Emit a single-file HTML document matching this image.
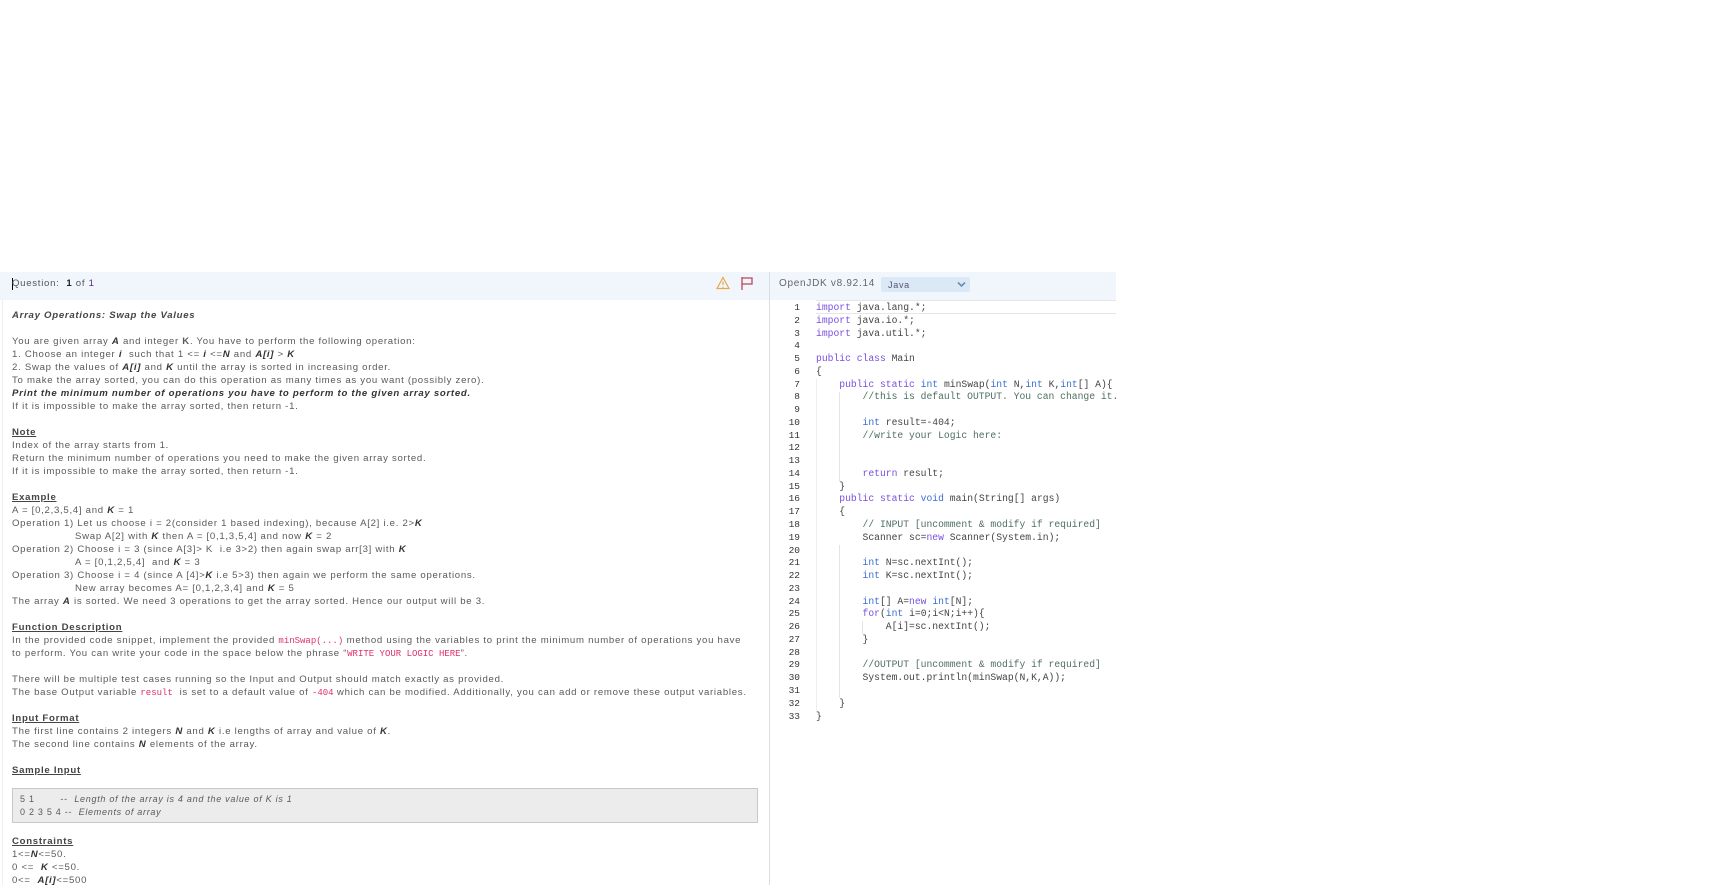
<!DOCTYPE html>
<html><head><meta charset="utf-8"><style>
*{margin:0;padding:0;box-sizing:border-box}
body{width:1716px;height:885px;background:#fff;position:relative;overflow:hidden;font-family:"Liberation Sans",sans-serif}
.hdr{position:absolute;top:272px;height:28px;background:#f1f6fc}
.t{position:absolute;left:12px;font-size:9.6px;letter-spacing:0.72px;color:#5a5a5a;white-space:nowrap;line-height:14px}
.h{font-weight:bold;text-decoration:underline;color:#444}
.b{font-weight:bold;font-style:italic;color:#333}
.m{font-family:"Liberation Mono",monospace;color:#e0306a;font-size:9px;letter-spacing:0}
.cw{position:absolute;left:816px;top:302px}
.cw div{height:12.78px;line-height:12.78px;font-family:"Liberation Mono",monospace;font-size:9.7px;color:#444;white-space:pre}
.nw{position:absolute;left:780px;top:302px;width:20px;text-align:right}
.nw div{height:12.78px;line-height:12.78px;font-family:"Liberation Mono",monospace;font-size:9.5px;color:#333}
.k{color:#7a4fe0}.ty{color:#3a6ed0}.cm{color:#4f6f60}
.g{position:absolute;width:1px;background:#e4e4e4}
</style></head><body>
<div class="hdr" style="left:0;width:769px"></div>
<div class="hdr" style="left:770px;width:346px"></div>
<div style="position:absolute;left:769px;top:272px;width:1px;height:613px;background:#dcdcdc"></div>
<div style="position:absolute;left:2px;top:300px;width:1px;height:585px;background:#eee"></div>
<div style="position:absolute;left:12px;top:278px;width:1px;height:12px;background:#000"></div>
<div class="t" style="top:277px;color:#555">Question: &nbsp;<b style="color:#223">1</b> of <span style="color:#5a2a7a">1</span></div>
<svg style="position:absolute;left:716px;top:276px" width="14" height="14" viewBox="0 0 14 14"><path d="M7 1.5L13 12.5H1Z" fill="none" stroke="#e8a64a" stroke-width="1.2"/><path d="M7 5.5V9M7 10.5V11.5" stroke="#e8a64a" stroke-width="1.2"/></svg>
<svg style="position:absolute;left:740px;top:276px" width="14" height="15" viewBox="0 0 14 15"><path d="M2 1V14M2 2H12V8H2" fill="none" stroke="#c0445a" stroke-width="1.3"/></svg>
<div class="t" style="left:779px;top:277px;font-size:10px;color:#666">OpenJDK v8.92.14</div>
<div style="position:absolute;left:881px;top:277px;width:89px;height:15px;background:#dbe8f5;border-radius:2px"></div>
<div class="t" style="left:888px;top:278px;font-size:9px;color:#557">Java</div>
<svg style="position:absolute;left:957px;top:281px" width="9" height="7" viewBox="0 0 9 7"><path d="M1 1.5L4.5 5L8 1.5" fill="none" stroke="#6a8fb0" stroke-width="1.6"/></svg>
<div style="position:absolute;left:816px;top:300px;width:300px;height:14px;border-top:1px solid #e6e6e6;border-bottom:1px solid #e6e6e6"></div>

<div class="t b" style="top:309px;color:#444">Array Operations: Swap the Values</div>
<div class="t" style="top:335px">You are given array <span class="b">A</span> and integer <b>K</b>. You have to perform the following operation:</div>
<div class="t" style="top:348px">1. Choose an integer <span class="b">i</span> &nbsp;such that 1 &lt;= <span class="b">i</span> &lt;=<span class="b">N</span> and <span class="b">A[i]</span> &gt; <span class="b">K</span></div>
<div class="t" style="top:361px">2. Swap the values of <span class="b">A[i]</span> and <span class="b">K</span> until the array is sorted in increasing order.</div>
<div class="t" style="top:374px">To make the array sorted, you can do this operation as many times as you want (possibly zero).</div>
<div class="t b" style="top:387px">Print the minimum number of operations you have to perform to the given array sorted.</div>
<div class="t" style="top:400px">If it is impossible to make the array sorted, then return -1.</div>
<div class="t h" style="top:426px">Note</div>
<div class="t" style="top:439px">Index of the array starts from 1.</div>
<div class="t" style="top:452px">Return the minimum number of operations you need to make the given array sorted.</div>
<div class="t" style="top:465px">If it is impossible to make the array sorted, then return -1.</div>
<div class="t h" style="top:491px">Example</div>
<div class="t" style="top:504px">A = [0,2,3,5,4] and <span class="b">K</span> = 1</div>
<div class="t" style="top:517px">Operation 1) Let us choose i = 2(consider 1 based indexing), because A[2] i.e. 2&gt;<span class="b">K</span></div>
<div class="t" style="top:530px;left:75px">Swap A[2] with <span class="b">K</span> then A = [0,1,3,5,4] and now <span class="b">K</span> = 2</div>
<div class="t" style="top:543px">Operation 2) Choose i = 3 (since A[3]&gt; K &nbsp;i.e 3&gt;2) then again swap arr[3] with <span class="b">K</span></div>
<div class="t" style="top:556px;left:75px">A = [0,1,2,5,4] &nbsp;and <span class="b">K</span> = 3</div>
<div class="t" style="top:569px">Operation 3) Choose i = 4 (since A [4]&gt;<span class="b">K</span> i.e 5&gt;3) then again we perform the same operations.</div>
<div class="t" style="top:582px;left:75px">New array becomes A= [0,1,2,3,4] and <span class="b">K</span> = 5</div>
<div class="t" style="top:595px">The array <span class="b">A</span> is sorted. We need 3 operations to get the array sorted. Hence our output will be 3.</div>
<div class="t h" style="top:621px">Function Description</div>
<div class="t" style="top:634px">In the provided code snippet, implement the provided <span class="m">minSwap(...)</span> method using the variables to print the minimum number of operations you have</div>
<div class="t" style="top:647px">to perform. You can write your code in the space below the phrase “<span class="m">WRITE YOUR LOGIC HERE</span>”.</div>
<div class="t" style="top:673px">There will be multiple test cases running so the Input and Output should match exactly as provided.</div>
<div class="t" style="top:686px">The base Output variable <span class="m">result</span> &nbsp;is set to a default value of <span class="m">-404</span> which can be modified. Additionally, you can add or remove these output variables.</div>
<div class="t h" style="top:712px">Input Format</div>
<div class="t" style="top:725px">The first line contains 2 integers <span class="b">N</span> and <span class="b">K</span> i.e lengths of array and value of <span class="b">K</span>.</div>
<div class="t" style="top:738px">The second line contains <span class="b">N</span> elements of the array.</div>
<div class="t h" style="top:764px">Sample Input</div>
<div style="position:absolute;left:12px;top:788px;width:746px;height:35px;background:#ececec;border:1px solid #c8c8c8"></div>
<div class="t" style="top:792px;left:20px;font-size:9px">5 1 &nbsp;&nbsp;&nbsp;&nbsp;&nbsp;&nbsp;&nbsp;-- &nbsp;<i>Length of the array is 4 and the value of K is 1</i></div>
<div class="t" style="top:805px;left:20px;font-size:9px">0 2 3 5 4 -- &nbsp;<i>Elements of array</i></div>
<div class="t h" style="top:835px">Constraints</div>
<div class="t" style="top:848px">1&lt;=<span class="b">N</span>&lt;=50.</div>
<div class="t" style="top:861px">0 &lt;= &nbsp;<span class="b">K</span> &lt;=50.</div>
<div class="t" style="top:874px">0&lt;= &nbsp;<span class="b">A[i]</span>&lt;=500</div>

<div class="g" style="left:816px;top:379px;height:333px;background:#eee"></div>
<div class="g" style="left:839px;top:392px;height:90px"></div>
<div class="g" style="left:839px;top:545px;height:153px"></div>
<div class="g" style="left:862px;top:621px;height:13px"></div>

<div class="nw"><div>1</div><div>2</div><div>3</div><div>4</div><div>5</div><div>6</div><div>7</div><div>8</div><div>9</div><div>10</div><div>11</div><div>12</div><div>13</div><div>14</div><div>15</div><div>16</div><div>17</div><div>18</div><div>19</div><div>20</div><div>21</div><div>22</div><div>23</div><div>24</div><div>25</div><div>26</div><div>27</div><div>28</div><div>29</div><div>30</div><div>31</div><div>32</div><div>33</div></div>
<div class="cw">
<div><span class="k">import</span> java.lang.*;</div>
<div><span class="k">import</span> java.io.*;</div>
<div><span class="k">import</span> java.util.*;</div>
<div></div>
<div><span class="k">public class</span> Main</div>
<div>{</div>
<div>    <span class="k">public static</span> <span class="ty">int</span> minSwap(<span class="ty">int</span> N,<span class="ty">int</span> K,<span class="ty">int</span>[] A){</div>
<div>        <span class="cm">//this is default OUTPUT. You can change it.</span></div>
<div></div>
<div>        <span class="ty">int</span> result=-404;</div>
<div>        <span class="cm">//write your Logic here:</span></div>
<div></div>
<div></div>
<div>        <span class="k">return</span> result;</div>
<div>    }</div>
<div>    <span class="k">public static</span> <span class="ty">void</span> main(String[] args)</div>
<div>    {</div>
<div>        <span class="cm">// INPUT [uncomment &amp; modify if required]</span></div>
<div>        Scanner sc=<span class="k">new</span> Scanner(System.in);</div>
<div></div>
<div>        <span class="ty">int</span> N=sc.nextInt();</div>
<div>        <span class="ty">int</span> K=sc.nextInt();</div>
<div></div>
<div>        <span class="ty">int</span>[] A=<span class="k">new</span> <span class="ty">int</span>[N];</div>
<div>        <span class="k">for</span>(<span class="ty">int</span> i=0;i&lt;N;i++){</div>
<div>            A[i]=sc.nextInt();</div>
<div>        }</div>
<div></div>
<div>        <span class="cm">//OUTPUT [uncomment &amp; modify if required]</span></div>
<div>        System.out.println(minSwap(N,K,A));</div>
<div></div>
<div>    }</div>
<div>}</div>
</div>
</body></html>
